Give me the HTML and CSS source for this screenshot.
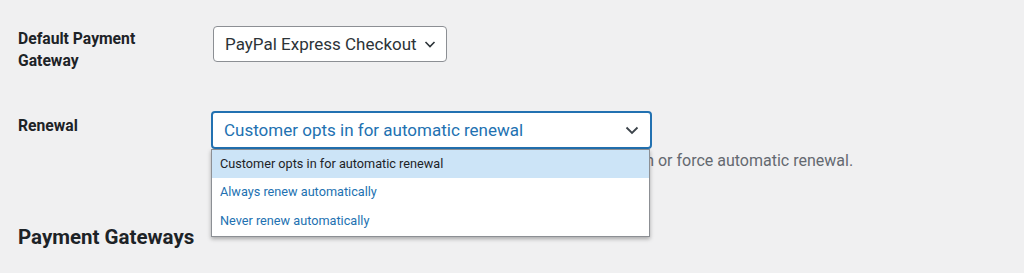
FILE: index.html
```html
<!DOCTYPE html>
<html lang="en">
<head>
    <meta charset="UTF-8">
    <meta name="viewport" content="width=device-width, initial-scale=1.0">
    <title>Subscription Settings</title>
    <link rel="stylesheet" href="styles.css">
</head>
<body>
    <div class="settings">
        <div class="row">
            <div class="label">Default Payment<br>Gateway</div>
            <div class="field">
                <div class="select">
                    <span>PayPal Express Checkout</span>
                    <svg class="chevron" width="14" height="14" viewBox="0 0 14 14"><path d="M2.5 5l4.5 4.5 4.5-4.5" fill="none" stroke="#2c3338" stroke-width="1.6"/></svg>
                </div>
            </div>
        </div>

        <div class="row renewal-row">
            <div class="label">Renewal</div>
            <div class="field">
                <div class="select-wrap">
                    <div class="select select-focus">
                        <span>Customer opts in for automatic renewal</span>
                        <svg class="chevron" width="16" height="16" viewBox="0 0 16 16"><path d="M2.5 5.5l5.5 5.5 5.5-5.5" fill="none" stroke="#3c434a" stroke-width="1.8"/></svg>
                    </div>
                    <ul class="dropdown">
                        <li class="active">Customer opts in for automatic renewal</li>
                        <li>Always renew automatically</li>
                        <li>Never renew automatically</li>
                    </ul>
                </div>
                <p class="description">Let buyers opt in to automatic renewal with a checkout switch or force automatic renewal.</p>
            </div>
        </div>

        <h2>Payment Gateways</h2>
    </div>
</body>
</html>
```

FILE: styles.css
```css
* {
    margin: 0;
    padding: 0;
    box-sizing: border-box;
}
body {
    font-family: Roboto, "Liberation Sans", sans-serif;
    background-color: #f0f0f1;
    color: #1d2327;
    width: 1024px;
    height: 273px;
    overflow: hidden;
}
.settings {
    padding: 26px 18px 0;
}
.row {
    display: flex;
}
.label {
    width: 195px;
    font-size: 15.7px;
    font-weight: bold;
    line-height: 22px;
    padding-top: 2px;
    color: #1d2327;
}
.select {
    display: inline-flex;
    align-items: center;
    height: 36px;
    padding: 0 9px 0 11px;
    border: 1px solid #8c8f94;
    border-radius: 4px;
    background-color: white;
    font-size: 17px;
    color: #2c3338;
}
.select .chevron {
    margin-left: 6px;
}
.renewal-row {
    margin-top: 39px;
}
.renewal-row .label {
    padding-top: 4px;
}
.renewal-row .field {
    margin-left: -2px;
}
.select-wrap {
    position: relative;
    z-index: 1;
    width: 441px;
}
.select-focus {
    display: flex;
    justify-content: space-between;
    width: 441px;
    height: 38px;
    padding: 0 10px 0 11px;
    border: 2px solid #2271b1;
    color: #2271b1;
}
.dropdown {
    position: absolute;
    top: 38px;
    left: 0;
    width: 439px;
    list-style: none;
    background-color: white;
    border: 1px solid #8c8f94;
    box-shadow: 0 2px 4px rgba(0, 0, 0, 0.3);
    font-size: 12.7px;
    color: #2271b1;
}
.dropdown li {
    height: 29px;
    line-height: 28px;
    padding-left: 8px;
}
.dropdown li.active {
    background-color: #cce4f7;
    color: #1d2327;
    height: 28px;
}
.description {
    margin: 2px 0 0 5px;
    font-size: 16px;
    line-height: 20px;
    color: #646970;
    white-space: nowrap;
}
h2 {
    margin-top: 54px;
    font-size: 20.5px;
    line-height: 25px;
    font-weight: bold;
    color: #1d2327;
}
```
